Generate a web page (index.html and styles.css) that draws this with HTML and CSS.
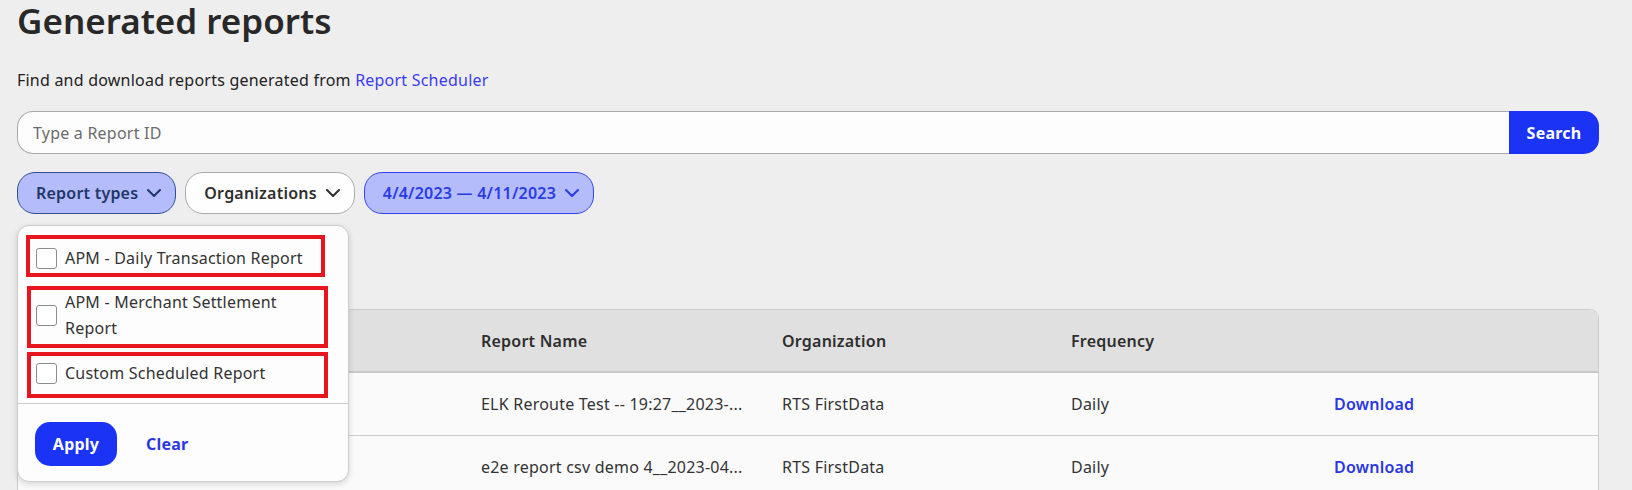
FILE: index.html
```html
<html>

	<head>
		<title>Generated reports</title>
		<link rel="stylesheet" href="styles.css">
	</head>

	<body>

	<div class="page">
		<h1 class="title">Generated reports</h1>
		<p class="intro">Find and download reports generated from <a class="link" href="#">Report Scheduler</a></p>

		<!--
			Search by report id
		-->
		<div class="searchBar">
			<input class="searchInput" type="text" placeholder="Type a Report ID">
			<button class="searchBut">Search</button>
		</div>

		<!--
			Filter pills, report types dropdown is open
		-->
		<div class="filters">
			<button class="pill pillActive">Report types
				<svg class="chev" width="14" height="8" viewBox="0 0 14 8"><polyline points="1,1 7,7 13,1"/></svg>
			</button>
			<button class="pill">Organizations
				<svg class="chev" width="14" height="8" viewBox="0 0 14 8"><polyline points="1,1 7,7 13,1"/></svg>
			</button>
			<button class="pill pillDate">4/4/2023 — 4/11/2023
				<svg class="chev" width="14" height="8" viewBox="0 0 14 8"><polyline points="1,1 7,7 13,1"/></svg>
			</button>

			<div class="dropdown">
				<div class="optionList">
					<label class="option opt1"><span class="checkbox"></span><span>APM - Daily Transaction Report</span></label>
					<label class="option opt2"><span class="checkbox"></span><span>APM - Merchant Settlement Report</span></label>
					<label class="option opt3"><span class="checkbox"></span><span>Custom Scheduled Report</span></label>
				</div>
				<div class="dropFoot">
					<button class="applyBut">Apply</button>
					<button class="clearBut">Clear</button>
				</div>
			</div>
		</div>

		<!--
			Report list (first column sits under the open dropdown)
		-->
		<div class="reportTable">
			<div class="row head">
				<div class="cell"></div>
				<div class="cell">Report Name</div>
				<div class="cell">Organization</div>
				<div class="cell">Frequency</div>
				<div class="cell"></div>
			</div>
			<div class="row">
				<div class="cell"></div>
				<div class="cell">ELK Reroute Test -- 19:27__2023-...</div>
				<div class="cell">RTS FirstData</div>
				<div class="cell">Daily</div>
				<div class="cell"><a class="download" href="#">Download</a></div>
			</div>
			<div class="row">
				<div class="cell"></div>
				<div class="cell">e2e report csv demo 4__2023-04...</div>
				<div class="cell">RTS FirstData</div>
				<div class="cell">Daily</div>
				<div class="cell"><a class="download" href="#">Download</a></div>
			</div>
		</div>
	</div>

	</body>

</html>
```

FILE: styles.css
```css
body {
	margin: 0;
	background-color: #eeeeee;
	font-family: "Noto Sans", "Open Sans", sans-serif;
	letter-spacing: 0.22px;
	color: #2b2b2b;
}

.page {
	padding: 0 33px 0 17px;
}

.title {
	margin: 0;
	padding-top: 2px;
	font-size: 35px;
	line-height: 38px;
	font-weight: 600;
	letter-spacing: 0;
	color: #282828;
}

.intro {
	margin: 28px 0 0 0;
	font-size: 16px;
	line-height: 24px;
	color: #222;
}

.link {
	color: #3b3cf2;
	text-decoration: none;
}

/* Search bar */
.searchBar {
	display: flex;
	margin-top: 19px;
	height: 43px;
}

.searchInput {
	flex: 1;
	height: 43px;
	box-sizing: border-box;
	border: 1px solid #aaaaaa;
	border-right: none;
	border-radius: 16px 0 0 16px;
	background-color: #fdfdfd;
	padding: 0 15px;
	font-family: inherit;
	font-size: 16px;
	letter-spacing: inherit;
	color: #333;
	outline: none;
}

.searchInput::placeholder {
	color: #6b6b6b;
}

.searchBut {
	width: 90px;
	border: none;
	border-radius: 0 15px 15px 0;
	background-color: #1b33f5;
	color: white;
	font-family: inherit;
	font-size: 16px;
	font-weight: 700;
	letter-spacing: inherit;
}

/* Filter pills */
.filters {
	position: relative;
	display: flex;
	gap: 9px;
	margin-top: 18px;
}

.pill {
	display: flex;
	align-items: center;
	gap: 9px;
	height: 42px;
	box-sizing: border-box;
	padding: 0 14px 0 18px;
	border: 1px solid #aaaaaa;
	border-radius: 18px;
	background-color: #fefefe;
	color: #2f2f2f;
	font-family: inherit;
	font-size: 16px;
	font-weight: 600;
	letter-spacing: inherit;
}

.pillActive {
	background-color: #b4bcfb;
	border-color: #2d4f96;
	color: #1f3768;
}

.pillDate {
	background-color: #b4bcfb;
	border-color: #3344ee;
	color: #2a3be6;
}

.chev polyline {
	fill: none;
	stroke: currentColor;
	stroke-width: 2;
	stroke-linecap: round;
	stroke-linejoin: round;
}

/* Report types dropdown */
.dropdown {
	position: absolute;
	top: 53px;
	left: 0;
	z-index: 5;
	width: 332px;
	height: 257px;
	box-sizing: border-box;
	background-color: #fdfdfd;
	border: 1px solid #cccccc;
	border-radius: 12px;
	box-shadow: 0 2px 6px rgba(0, 0, 0, 0.15);
}

.optionList {
	padding: 9px 0 5px 8px;
	display: flex;
	flex-direction: column;
}

.option {
	display: flex;
	align-items: center;
	gap: 8px;
	box-sizing: border-box;
	border: 4px solid #e8141e;
	padding: 0 4px 0 6px;
	font-size: 16px;
	line-height: 26px;
	color: #333;
}

.opt1 {
	width: 299px;
	height: 42px;
	padding-top: 4px;
}

.opt2 {
	width: 301px;
	height: 62px;
	margin: 9px 0 0 1px;
	padding-left: 5px;
	padding-bottom: 4px;
}

.opt3 {
	width: 301px;
	height: 46px;
	margin: 4px 0 0 1px;
	padding-left: 5px;
	padding-bottom: 4px;
}

.checkbox {
	flex: none;
	width: 21px;
	height: 21px;
	box-sizing: border-box;
	border: 1px solid #8c8c8c;
	border-radius: 3px;
	background-color: #fff;
}

.dropFoot {
	display: flex;
	align-items: center;
	gap: 29px;
	border-top: 1px solid #cccccc;
	padding: 18px 17px;
}

.applyBut {
	width: 82px;
	height: 44px;
	border: none;
	border-radius: 15px;
	background-color: #1b33f5;
	color: white;
	font-family: inherit;
	font-size: 16px;
	font-weight: 700;
	letter-spacing: inherit;
}

.clearBut {
	border: none;
	background: none;
	padding: 0;
	color: #2a37e4;
	font-family: inherit;
	font-size: 16px;
	font-weight: 700;
	letter-spacing: inherit;
}

/* Report table */
.reportTable {
	margin-top: 95px;
	border: 1px solid #cccccc;
	border-radius: 9px;
	overflow: hidden;
	background-color: #fafafa;
}

.row {
	display: grid;
	grid-template-columns: 447px 301px 289px 263px 1fr;
	height: 62px;
	border-bottom: 1px solid #cccccc;
	font-size: 16px;
	color: #333;
}

.row.head {
	height: 61px;
	border-bottom: 2px solid #c8c8c8;
	background-color: #e0e0e0;
	font-weight: 600;
	color: #2e2e2e;
}

.cell {
	display: flex;
	align-items: center;
	padding: 0 16px;
	white-space: nowrap;
	overflow: hidden;
}

.download {
	color: #2a37e4;
	font-weight: 600;
	text-decoration: none;
}
```
